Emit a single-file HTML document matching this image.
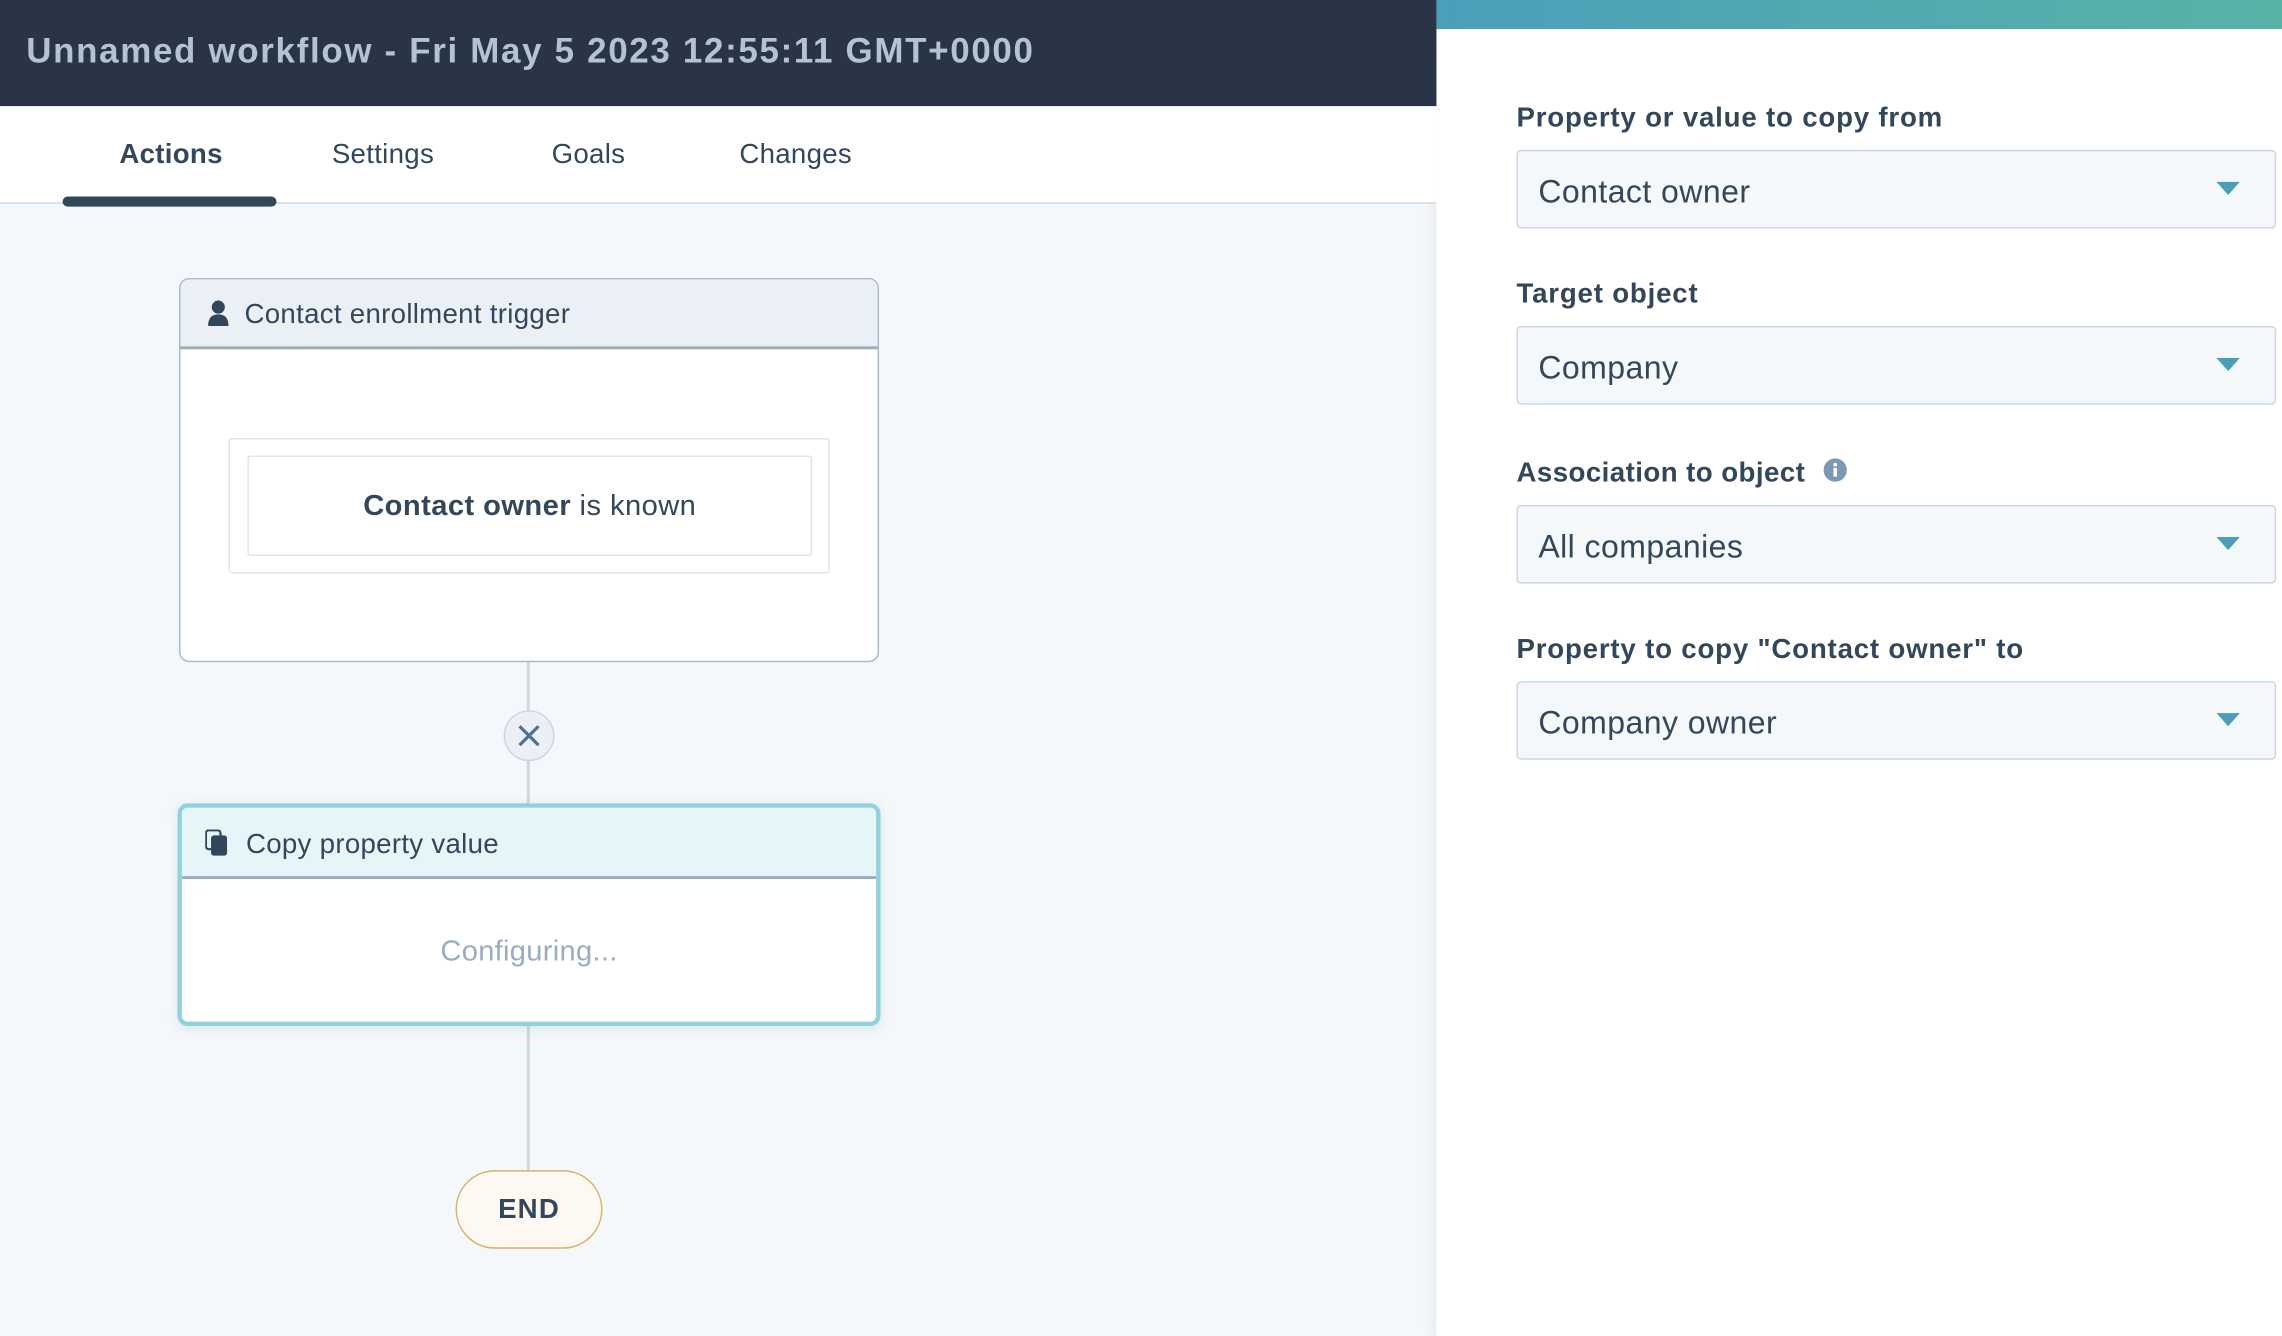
<!DOCTYPE html>
<html><head><meta charset="utf-8"><style>
*{box-sizing:border-box;margin:0;padding:0}
html,body{width:2282px;height:1336px;overflow:hidden;background:#f5f8fa}
#s{position:absolute;left:0;top:0;width:1568px;height:918px;transform:scale(1.45536);transform-origin:0 0;font-family:"Liberation Sans",sans-serif;color:#33475b}
.a{position:absolute}
.hdr{left:0;top:0;width:987px;height:73px;background:#293546}
.ttl{left:18px;top:22px;font-size:24px;font-weight:bold;color:#b4c2d6;white-space:nowrap;letter-spacing:1.15px}
.tabs{left:0;top:73px;width:987px;height:67px;background:#fff;border-bottom:1.5px solid #cbd6e2}
.tab{top:96px;font-size:19px;color:#33475b;letter-spacing:.2px}
.card{background:#fff;border:1.5px solid #a9b8ca;border-radius:7px;overflow:hidden}
.ch{height:48px;border-bottom:2px solid #99acc2;display:flex;align-items:center;padding-left:18px;font-size:19px;padding-top:4px;letter-spacing:.2px}
.lbl{font-size:19px;font-weight:bold;left:1042px;color:#33475b;letter-spacing:.55px}
.dd{left:1042px;width:522px;height:54px;background:#f5f8fa;border:1.5px solid #cbd6e2;border-radius:3px;font-size:22px;padding:15px 0 0 14px;color:#33475b;letter-spacing:.3px}
.dd:after{content:"";position:absolute;right:24px;top:21px;border-left:8px solid transparent;border-right:8px solid transparent;border-top:9px solid #4a9fb8}
</style></head><body><div id="s">
<div class="a" style="left:987px;top:0;width:581px;height:918px;background:#fff;box-shadow:-3px 0 8px rgba(0,0,0,.06)"></div>
<div class="a" style="left:987px;top:0;width:581px;height:20px;background:linear-gradient(90deg,#4a9fb9,#57b3a6)"></div>
<div class="a hdr"></div>
<div class="a ttl">Unnamed workflow - Fri May 5 2023 12:55:11 GMT+0000</div>
<div class="a tabs"></div>
<div class="a tab" style="left:82px;font-weight:bold">Actions</div>
<div class="a tab" style="left:228px">Settings</div>
<div class="a tab" style="left:379px">Goals</div>
<div class="a tab" style="left:508px">Changes</div>
<div class="a" style="left:43px;top:135px;width:147px;height:7px;border-radius:4px;background:#33475b"></div>

<div class="a" style="left:362px;top:454px;width:2px;height:350px;background:#cbd6e2"></div>
<div class="a" style="left:346px;top:488px;width:35px;height:35px;border-radius:50%;background:#eaf0f6;border:1.5px solid #cbd6e2"></div>
<svg class="a" style="left:355px;top:497px" width="17" height="17" viewBox="0 0 17 17"><path d="M2 2L15 15M15 2L2 15" stroke="#516f90" stroke-width="2.2"/></svg>

<div class="a card" style="left:123px;top:191px;width:481px;height:264px">
<div class="ch" style="background:#eaf0f6"><svg width="16" height="18" viewBox="0 0 16 18" style="margin-right:10px;margin-top:-4px"><circle cx="8" cy="5" r="4.5" fill="#33475b"/><path d="M1 18C1 12 4 10 8 10S15 12 15 18Z" fill="#33475b"/></svg>Contact enrollment trigger</div>
<div class="a" style="left:33px;top:109px;width:413px;height:93px;border:1.5px solid #dfe3eb;border-radius:2px"></div>
<div class="a" style="left:46px;top:121px;width:388px;height:69px;border:1.5px solid #dfe3eb;border-radius:2px;text-align:center;line-height:68px;font-size:20px;letter-spacing:.3px"><b>Contact owner</b> is known</div>
</div>

<div class="a card" style="left:122px;top:552px;width:483px;height:153px;border:3px solid #91d1dd;box-shadow:0 2px 8px rgba(100,160,180,.2)">
<div class="ch" style="background:#e5f5f8;height:49px;padding-left:16px"><svg width="16" height="18" viewBox="0 0 16 18" style="margin-right:12px;margin-top:-4px"><rect x="0.5" y="0.5" width="10" height="13" rx="2" fill="none" stroke="#33475b" stroke-width="1.5"/><rect x="4" y="4" width="11" height="14" rx="2" fill="#33475b"/></svg>Copy property value</div>
<div style="text-align:center;font-size:20px;color:#99acc2;padding-top:39px;letter-spacing:.2px">Configuring...</div>
</div>

<div class="a" style="left:313px;top:804px;width:101px;height:54px;border-radius:27px;background:#fdf8f1;border:1.5px solid #d7b263;text-align:center;line-height:53px;font-size:19px;font-weight:bold;color:#33475b;letter-spacing:.8px">END</div>

<div class="a lbl" style="top:71px">Property or value to copy from</div>
<div class="a dd" style="top:103px">Contact owner</div>
<div class="a lbl" style="top:192px">Target object</div>
<div class="a dd" style="top:224px">Company</div>
<div class="a lbl" style="top:315px;letter-spacing:.3px">Association to object</div>
<svg class="a" style="left:1253px;top:315px" width="16" height="16" viewBox="0 0 16 16"><circle cx="8" cy="8" r="8" fill="#7c98b6"/><rect x="6.8" y="6.5" width="2.4" height="6" fill="#fff"/><circle cx="8" cy="4.3" r="1.3" fill="#fff"/></svg>
<div class="a dd" style="top:347px">All companies</div>
<div class="a lbl" style="top:436px">Property to copy "Contact owner" to</div>
<div class="a dd" style="top:468px">Company owner</div>
</div></body></html>
